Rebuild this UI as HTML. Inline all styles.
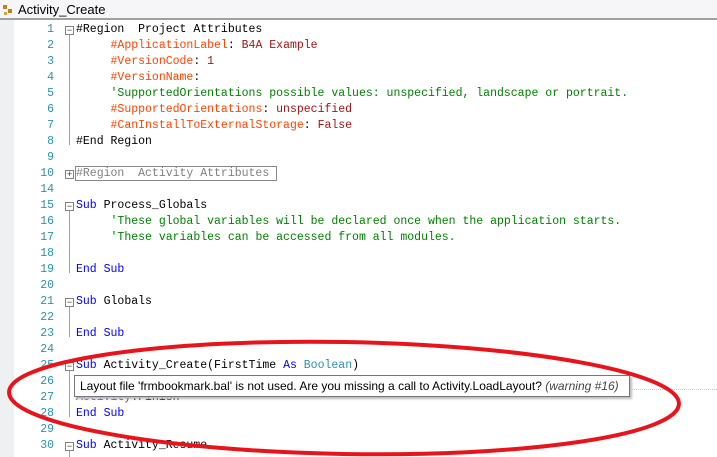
<!DOCTYPE html>
<html><head><meta charset="utf-8"><style>
html,body{margin:0;padding:0;width:717px;height:457px;overflow:hidden;background:#fff;}
.tab{position:absolute;left:0;top:0;width:717px;height:20px;background:#f6f6f8;border-bottom:2px solid #a0a0a0;box-sizing:border-box;}
.tab span{position:absolute;left:18px;top:2px;font:13px "Liberation Sans",sans-serif;color:#000;}
.strip{position:absolute;left:0;top:20px;width:14px;height:437px;background:#eef0f2;}
.ln{position:absolute;left:20px;width:34px;text-align:right;font:11.5px "Liberation Mono",monospace;color:#2b91af;line-height:16px;}
.cd{position:absolute;left:76px;font:11.5px "Liberation Mono",monospace;line-height:16px;white-space:pre;color:#000;}
.k{color:#0000ff}.g{color:#008000}.o{color:#ff4500}.r{color:#a31515}.t{color:#2b91af}.gr{color:#808080}
.fold{position:absolute;left:65px;width:7px;height:7px;border:1px solid #808080;background:#fff;font:9px/7px "Liberation Sans",sans-serif;text-align:center;color:#333;}
.vl{position:absolute;left:69px;width:1px;background:#a0a0a0;}
.tip{position:absolute;left:74px;top:375px;width:556px;height:22px;border:1px solid #767676;background:#fff;box-shadow:2px 2px 2px #bbb;font:12px "Liberation Sans",sans-serif;line-height:20px;padding-left:5px;box-sizing:border-box;white-space:nowrap;}
</style></head><body>
<div class="tab"><svg style="position:absolute;left:2px;top:3px" width="14" height="14"><rect x="1" y="2" width="4" height="4" fill="#c08020"/><rect x="6" y="6" width="4" height="4" fill="#c08020"/><rect x="2" y="9" width="3" height="3" fill="#d0a050"/></svg><span>Activity_Create</span></div>
<div class="strip"></div>
<div class="ln" style="top:22px">1<br>2<br>3<br>4<br>5<br>6<br>7<br>8<br>9<br>10<br>14<br>15<br>16<br>17<br>18<br>19<br>20<br>21<br>22<br>23<br>24<br>25<br>26<br>27<br>28<br>29<br>30</div>
<div class="fold" style="top:26px">−</div><div class="vl" style="top:35px;height:110px"></div>
<div class="fold" style="top:170px">+</div>
<div class="fold" style="top:202px">−</div><div class="vl" style="top:211px;height:62px"></div>
<div class="fold" style="top:298px">−</div><div class="vl" style="top:307px;height:30px"></div>
<div class="fold" style="top:362px">−</div><div class="vl" style="top:371px;height:46px"></div>
<div class="fold" style="top:442px">−</div><div class="vl" style="top:451px;height:6px"></div>
<div class="cd" style="top:22px">#Region  Project Attributes
     <span class="o">#ApplicationLabel</span>: <span class="r">B4A Example</span>
     <span class="o">#VersionCode</span>: <span class="r">1</span>
     <span class="o">#VersionName</span>:
     <span class="g">'SupportedOrientations possible values: unspecified, landscape or portrait.</span>
     <span class="o">#SupportedOrientations</span>: <span class="r">unspecified</span>
     <span class="o">#CanInstallToExternalStorage</span>: <span class="r">False</span>
#End Region

<span class="gr" style="outline:1px solid #888;outline-offset:0">#Region  Activity Attributes </span>

<span class="k">Sub</span> Process_Globals
     <span class="g">'These global variables will be declared once when the application starts.</span>
     <span class="g">'These variables can be accessed from all modules.</span>

<span class="k">End Sub</span>

<span class="k">Sub</span> Globals

<span class="k">End Sub</span>

<span class="k">Sub</span> Activity_Create(FirstTime <span class="k">As</span> <span class="t">Boolean</span>)

<span style="color:#7030a0">Activity</span>.Finish
<span class="k">End Sub</span>

<span class="k">Sub</span> Activity_Resume</div>
<div style="position:absolute;left:630px;top:389px;width:87px;border-top:1px dotted #c8c8c8"></div>
<div class="tip">Layout file 'frmbookmark.bal' is not used. Are you missing a call to Activity.LoadLayout? <i style="color:#444">(warning #16)</i></div>
<svg style="position:absolute;left:0;top:0" width="717" height="457"><ellipse cx="344" cy="398" rx="335" ry="56" transform="rotate(1 344 398)" fill="none" stroke="#e8141c" stroke-width="4"/></svg>
</body></html>
